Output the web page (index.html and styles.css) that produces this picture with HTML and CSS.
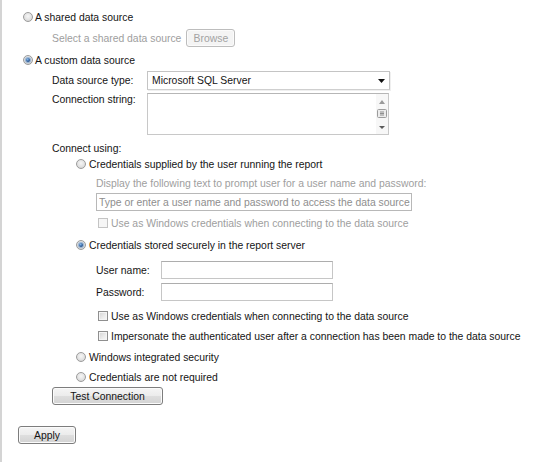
FILE: index.html
```html
<!DOCTYPE html>
<html>
<head>
<meta charset="utf-8">
<link rel="stylesheet" href="styles.css">
</head>
<body>
<div class="frame">
  <div class="page">
    <div class="row opt shared-row"><span class="radio"></span><span>A shared data source</span></div>
    <div class="row sub browse-row"><span class="dis">Select a shared data source</span><button class="btn btn-dis browse">Browse</button></div>
    <div class="row opt custom-row"><span class="radio on"></span><span>A custom data source</span></div>
    <div class="sub col">
      <div class="field type-row">
        <span class="flabel">Data source type:</span>
        <div class="select"><span>Microsoft SQL Server</span>
          <svg class="sel-arrow" width="7" height="4" viewBox="0 0 7 4"><path d="M0 0H7L3.5 4Z" fill="#111"/></svg>
        </div>
      </div>
      <div class="field conn-row">
        <span class="flabel tall">Connection string:</span>
        <div class="textarea">
          <div class="sb">
            <svg width="12" height="10" viewBox="0 0 12 10"><path d="M3 7H9L6 3Z" fill="#9a9a9a"/></svg>
            <svg class="thumb" width="10" height="9" viewBox="0 0 10 9"><rect x="0.5" y="0.5" width="9" height="8" rx="1" fill="#ececec" stroke="#9c9c9c"/><path d="M3 3H7M3 4.5H7M3 6H7" stroke="#777" stroke-width="0.8"/></svg>
            <svg class="down" width="12" height="10" viewBox="0 0 12 10"><path d="M3 4H9L6 7Z" fill="#5a5a5a"/></svg>
          </div>
        </div>
      </div>
      <div class="row connect-row">Connect using:</div>
      <div class="sub2 col">
        <div class="row radio-row supplied-row"><span class="radio"></span><span>Credentials supplied by the user running the report</span></div>
        <div class="sub3 col">
          <div class="row dis display-row">Display the following text to prompt user for a user name and password:</div>
          <input class="txt prompt" type="text" readonly value="Type or enter a user name and password to access the data source">
          <div class="row check-row dis win1-row"><span class="check off"></span><span>Use as Windows credentials when connecting to the data source</span></div>
        </div>
        <div class="row radio-row stored-row"><span class="radio on"></span><span>Credentials stored securely in the report server</span></div>
        <div class="sub3 col">
          <div class="field user-row"><span class="ulabel">User name:</span><input class="txt cred" type="text" readonly></div>
          <div class="field pass-row"><span class="ulabel">Password:</span><input class="txt cred" type="password" readonly></div>
          <div class="row check-row win2-row"><span class="check"></span><span>Use as Windows credentials when connecting to the data source</span></div>
          <div class="row check-row imp-row"><span class="check"></span><span>Impersonate the authenticated user after a connection has been made to the data source</span></div>
        </div>
        <div class="row radio-row integ-row"><span class="radio"></span><span>Windows integrated security</span></div>
        <div class="row radio-row none-row"><span class="radio"></span><span>Credentials are not required</span></div>
      </div>
      <div class="test-row"><button class="btn test">Test Connection</button></div>
    </div>
  </div>
  <div class="apply-row"><button class="btn apply">Apply</button></div>
</div>
</body>
</html>
```

FILE: styles.css
```css
html, body {
  margin: 0;
  padding: 0;
  background: #fff;
}
body {
  font-family: "Liberation Sans", Arial, sans-serif;
  font-size: 10.4px;
  color: #141414;
}
.frame {
  border-left: 2px solid #d4d4d4;
  min-height: 462px;
  box-sizing: border-box;
  display: flex;
  flex-direction: column;
}
.page {
  display: flex;
  flex-direction: column;
  padding: 7px 0 0 21px;
}
.col {
  display: flex;
  flex-direction: column;
}
.row {
  display: flex;
  align-items: center;
  height: 16px;
  white-space: nowrap;
}
.opt {
  height: 20px;
  gap: 2px;
}
.sub {
  margin-left: 29px;
}
.sub2 {
  margin-left: 24px;
}
.sub3 {
  margin-left: 20px;
}
.dis {
  color: #9e9e9e;
}

/* fields */
.field {
  display: flex;
  align-items: center;
}
.flabel {
  width: 95px;
  flex: none;
}
.flabel.tall {
  line-height: 14px;
}
.ulabel {
  width: 65px;
  flex: none;
}

/* vertical rhythm */
.shared-row { margin-top: 0; }
.browse-row { margin-top: 1px; height: 20px; }
.custom-row { margin-top: 2px; }
.type-row { margin-top: 1px; height: 19px; }
.field.conn-row { margin-top: 3px; height: 42px; align-items: flex-start; }
.connect-row { margin-top: 5px; }
.supplied-row { margin-top: 0; }
.display-row { margin-top: 3px; }
.prompt { margin-top: 2px; }
.win1-row { margin-top: 4px; }
.stored-row { margin-top: 6px; }
.user-row { margin-top: 8px; height: 18px; }
.pass-row { margin-top: 4px; height: 18px; }
.win2-row { margin-top: 7px; }
.imp-row { margin-top: 4px; }
.integ-row { margin-top: 5px; }
.none-row { margin-top: 4px; }
.test-row { margin-top: 2px; display: flex; }
.apply-row { margin: 21px 0 0 16px; display: flex; }

/* radios */
.radio {
  flex: none;
  width: 10px;
  height: 10px;
  box-sizing: border-box;
  border-radius: 50%;
  border: 1px solid #9c9c9c;
  background: radial-gradient(circle at 50% 40%, #f6f6f6 0, #e2e2e2 55%, #c9c9c9 100%);
  display: flex;
  align-items: center;
  justify-content: center;
}
.radio.on::after {
  content: "";
  width: 4px;
  height: 4px;
  border-radius: 50%;
  background: radial-gradient(circle at 40% 35%, #86b8ea 0, #2c5d9c 55%, #13305c 100%);
  box-shadow: 0 0 1px 1px rgba(70, 125, 190, 0.55);
}
.radio-row {
  gap: 3px;
}

/* checkboxes */
.check-row {
  gap: 3px;
}
.check {
  flex: none;
  width: 10px;
  height: 10px;
  margin-left: 2px;
  box-sizing: border-box;
  border: 1px solid #8f8f8f;
  background: linear-gradient(135deg, #d3d3d3 0%, #ececec 60%, #f8f8f8 100%);
  box-shadow: inset 0 0 0 1px #f4f4f4;
}
.check.off {
  border-color: #c4c4c4;
  background: #f6f6f6;
  box-shadow: none;
}

.select {
  width: 243px;
  height: 19px;
  box-sizing: border-box;
  border: 1px solid #c4c4c4;
  border-bottom-color: #cfcfcf;
  display: flex;
  align-items: center;
  justify-content: space-between;
  padding: 0 4px 0 4px;
  background: #fff;
  box-shadow: 1px 1px 0 #efefef;
}
.textarea {
  width: 242px;
  height: 42px;
  box-sizing: border-box;
  border: 1px solid #c8c8c8;
  border-top-color: #b6b6b6;
  display: flex;
  justify-content: flex-end;
  background: #fff;
}
.sb {
  width: 12px;
  display: flex;
  flex-direction: column;
  align-items: center;
  padding-top: 3px;
  background: #f7f7f7;
}
.sb .thumb {
  margin-top: 2px;
}
.sb .down {
  margin-top: 4px;
}
.txt {
  -webkit-appearance: none;
  appearance: none;
  box-sizing: border-box;
  height: 18px;
  margin-bottom: 0;
  border: 1px solid #c6c6c6;
  border-top-color: #adadad;
  border-radius: 0;
  background: #fff;
  font-family: "Liberation Sans", Arial, sans-serif;
  font-size: 10.4px;
  outline: none;
}
.prompt {
  width: 316px;
  padding: 0 0 0 2px;
  color: #8e8e8e;
  border-color: #b8b8b8;
}
.cred {
  width: 172px;
  padding: 0 2px;
}

/* buttons */
.btn {
  font-family: "Liberation Sans", Arial, sans-serif;
  font-size: 10.4px;
  color: #141414;
  height: 18px;
  box-sizing: border-box;
  padding: 0;
  border: 1px solid #7d7d7d;
  border-radius: 3px;
  background: linear-gradient(#f5f5f5 0%, #ececec 48%, #dedede 52%, #d3d3d3 100%);
  box-shadow: inset 0 0 0 1px #fbfbfb;
}
.btn-dis {
  color: #a2a2a2;
  border-color: #bdbdbd;
  background: #f4f4f4;
}
.browse {
  width: 49px;
  margin-left: 5px;
}
.test {
  width: 111px;
}
.apply {
  width: 58px;
}
```
